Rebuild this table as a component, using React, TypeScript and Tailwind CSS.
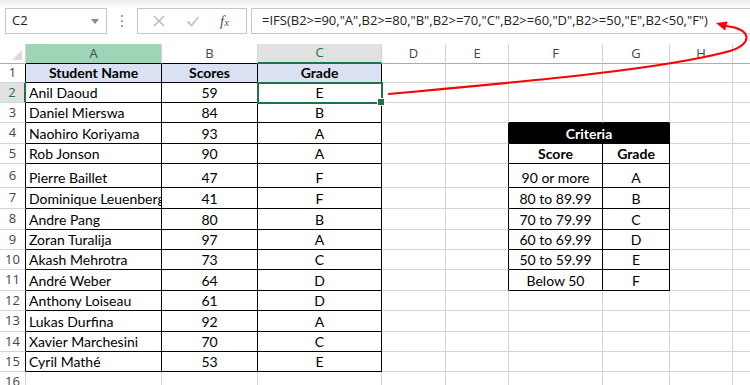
import React from "react";

const colW = [
  "w-[136px]",
  "w-[96px]",
  "w-[124px]",
  "w-[64px]",
  "w-[63px]",
  "w-[94px]",
  "w-[67px]",
  "w-[63px]",
  "w-[64px]",
];
const letters = ["A", "B", "C", "D", "E", "F", "G", "H", ""];
const rowH = [
  "h-[19px]",
  "h-[20px]",
  "h-[20px]",
  "h-[21px]",
  "h-[20px]",
  "h-[24px]",
  "h-[21px]",
  "h-[21px]",
  "h-[20px]",
  "h-[20px]",
  "h-[21px]",
  "h-[20px]",
  "h-[21px]",
  "h-[20px]",
  "h-[20px]",
  "h-[20px]",
];

const students: [string, string, string][] = [
  ["Anil Daoud", "59", "E"],
  ["Daniel Mierswa", "84", "B"],
  ["Naohiro Koriyama", "93", "A"],
  ["Rob Jonson", "90", "A"],
  ["Pierre Baillet", "47", "F"],
  ["Dominique Leuenberger", "41", "F"],
  ["Andre Pang", "80", "B"],
  ["Zoran Turalija", "97", "A"],
  ["Akash Mehrotra", "73", "C"],
  ["André Weber", "64", "D"],
  ["Anthony Loiseau", "61", "D"],
  ["Lukas Durfina", "92", "A"],
  ["Xavier Marchesini", "70", "C"],
  ["Cyril Mathé", "53", "E"],
];

const criteria: [string, string][] = [
  ["90 or more", "A"],
  ["80 to 89.99", "B"],
  ["70 to 79.99", "C"],
  ["60 to 69.99", "D"],
  ["50 to 59.99", "E"],
  ["Below 50", "F"],
];

const cellFont = "font-['Lato','Liberation_Sans',sans-serif] text-[14px] leading-[17px] text-black";
const hdrFont = "font-['Open_Sans','Liberation_Sans',sans-serif] text-[13px] text-[#444]";

function cellBorder(r: number, c: number) {
  const inTable = r >= 1 && r <= 15 && c <= 2;
  const inCrit = r >= 4 && r <= 11 && (c === 5 || c === 6);
  const blackR = inTable || inCrit || (r >= 4 && r <= 11 && c === 4);
  const blackB = inTable || (r >= 3 && r <= 11 && (c === 5 || c === 6));
  return [
    "border-r border-b border-[#d4d4d4]",
    blackR ? "border-r-black" : "",
    blackB ? "border-b-black" : "",
  ].join(" ");
}

function cellContent(r: number, c: number): { t: string; bold?: boolean; center?: boolean; bg?: string } {
  if (r === 1 && c <= 2) {
    return { t: ["Student Name", "Scores", "Grade"][c], bold: true, center: true, bg: "bg-[#d9e1f2]" };
  }
  if (r >= 2 && r <= 15 && c <= 2) {
    const s = students[r - 2];
    return { t: s[c], center: c > 0 };
  }
  if (r === 5 && (c === 5 || c === 6)) {
    return { t: c === 5 ? "Score" : "Grade", bold: true, center: true };
  }
  if (r >= 6 && r <= 11 && (c === 5 || c === 6)) {
    return { t: criteria[r - 6][c - 5], center: true };
  }
  return { t: "" };
}

function Row({ r }: { r: number }) {
  const hdrBorder =
    r === 2
      ? "border-r-2 border-r-[#217346] bg-[#e1e1e1] text-[#217346]"
      : r >= 1 && r <= 15
      ? "border-r border-r-black bg-white"
      : "border-r border-r-[#d4d4d4] bg-white";
  const cells: React.ReactNode[] = [];
  for (let c = 0; c < 9; c++) {
    if (r === 4 && c === 5) {
      cells.push(
        <div
          key={c}
          className={`w-[161px] shrink-0 box-border border-r border-b border-black bg-black flex items-end justify-center pb-[1px] ${cellFont} font-bold text-white`}
        >
          <span className="text-white">Criteria</span>
        </div>
      );
      continue;
    }
    if (r === 4 && c === 6) continue;
    const ct = cellContent(r, c);
    cells.push(
      <div
        key={c}
        className={`${colW[c]} shrink-0 box-border ${cellBorder(r, c)} ${ct.bg ?? ""} relative flex items-end overflow-hidden whitespace-nowrap pb-[1px] ${
          ct.center ? "justify-center" : "justify-start pl-[3px]"
        } ${cellFont} ${ct.bold ? "font-bold" : ""}`}
      >
        {ct.t ? <span>{ct.t}</span> : null}
      </div>
    );
  }
  return (
    <div className={`flex ${rowH[r - 1]}`}>
      <div
        className={`w-[26px] shrink-0 box-border border-b border-b-[#d4d4d4] ${hdrBorder} flex items-center justify-center ${hdrFont} ${
          r === 2 ? "text-[#217346]" : ""
        }`}
      >
        {r}
      </div>
      {cells}
    </div>
  );
}

export default function App() {
  return (
    <div className="relative w-[750px] h-[385px] overflow-hidden bg-white">
      {/* Formula bar */}
      <div className="h-[44px] flex items-start pt-[8px] pl-[5px] bg-[linear-gradient(#ececec,#ffffff_9px)]">
        <div className="w-[102px] h-[26px] box-border border border-[#c6c6c6] bg-white flex items-center justify-between pl-[6px] pr-[7px]">
          <span className="font-['Open_Sans','Liberation_Sans',sans-serif] text-[13px] text-[#222]">C2</span>
          <svg width="8" height="5" viewBox="0 0 8 5">
            <path d="M0 0 L8 0 L4 5 Z" fill="#888" />
          </svg>
        </div>
        <div className="w-[30px] h-[26px] flex flex-col items-center justify-center gap-[3px]">
          <div className="w-[2px] h-[2px] bg-[#a0a0a0]" />
          <div className="w-[2px] h-[2px] bg-[#a0a0a0]" />
          <div className="w-[2px] h-[2px] bg-[#a0a0a0]" />
        </div>
        <div className="w-[110px] h-[26px] box-border border border-[#c6c6c6] bg-white flex items-center">
          <svg width="14" height="14" viewBox="0 0 14 14" className="ml-[14px]">
            <path d="M2 2 L12 12 M12 2 L2 12" stroke="#b4b4b4" strokeWidth="1.3" />
          </svg>
          <svg width="14" height="14" viewBox="0 0 14 14" className="ml-[20px]">
            <path d="M1.5 7.5 L5.5 11.5 L12.5 3" stroke="#c4c4c4" strokeWidth="1.8" fill="none" />
          </svg>
          <span className="ml-[20px] font-['Liberation_Serif',serif] italic text-[15px] text-[#555] leading-none">
            f<span className="text-[11px]">x</span>
          </span>
        </div>
        <div className="ml-[4px] flex-1 h-[26px] box-border border border-r-0 border-[#c6c6c6] bg-white flex items-center pl-[10px]">
          <span className="font-['Open_Sans','Liberation_Sans',sans-serif] text-[13px] text-[#222] whitespace-nowrap">
            =IFS(B2&gt;=90,"A",B2&gt;=80,"B",B2&gt;=70,"C",B2&gt;=60,"D",B2&gt;=50,"E",B2&lt;50,"F")
          </span>
        </div>
      </div>

      {/* Column headers */}
      <div className="flex h-[20px]">
        <div className="w-[26px] shrink-0 box-border border-r border-[#d4d4d4] border-b border-b-[#ababab] relative bg-white">
          <svg width="10" height="10" viewBox="0 0 10 10" className="absolute right-[3px] bottom-[3px]">
            <path d="M10 0 L10 10 L0 10 Z" fill="#dadada" />
          </svg>
        </div>
        {letters.map((l, i) => {
          let extra = "border-b border-b-[#ababab] bg-white";
          if (i === 0) extra = "border-b border-b-black bg-[#9fd5b7]";
          if (i === 1) extra = "border-b border-b-black bg-white";
          if (i === 2) extra = "border-b-2 border-b-[#217346] bg-[#e1e1e1] text-[#217346]";
          return (
            <div
              key={i}
              className={`${colW[i]} shrink-0 box-border border-r border-r-[#d4d4d4] ${extra} flex items-center justify-center ${hdrFont} ${
                i === 2 ? "text-[#217346]" : ""
              }`}
            >
              {l}
            </div>
          );
        })}
      </div>

      {/* Rows */}
      <div className="relative">
        {Array.from({ length: 16 }, (_, i) => (
          <Row key={i} r={i + 1} />
        ))}
        {/* selected cell C2 */}
        <div className="absolute left-[257px] top-[18px] w-[126px] h-[22px] border-2 border-[#217346] pointer-events-none">
          <div className="absolute -right-[4px] -bottom-[4px] w-[6px] h-[6px] bg-[#217346] border border-white box-content" />
        </div>
      </div>

      {/* red arrow */}
      <svg className="absolute left-0 top-0 pointer-events-none" width="750" height="385" viewBox="0 0 750 385">
        <path
          d="M388 94 C520 82 660 70 730 51 C753 44 752 29 726 26"
          stroke="#ff0000"
          strokeWidth="2"
          fill="none"
        />
        <polygon points="716,23 727.5,21.5 725,30.5" fill="#ff0000" />
      </svg>
    </div>
  );
}
